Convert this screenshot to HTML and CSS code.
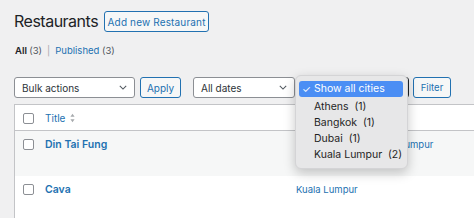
FILE: index.html
```html
<!DOCTYPE html>
<html>
<head>
<meta charset="utf-8">
<link rel="stylesheet" href="styles.css">
</head>
<body>
<div class="wrap">
  <div class="head">
    <h1 class="title">Restaurants</h1>
    <a class="btn btn-add">Add new Restaurant</a>
  </div>
  <ul class="subsub">
    <li class="current">All <span class="count">(3)</span></li>
    <li class="sep">|</li>
    <li><a class="link">Published</a> <span class="count">(3)</span></li>
  </ul>
  <div class="tablenav">
    <div class="select sel-bulk">Bulk actions<svg class="chev" viewBox="0 0 10 6"><path d="M1 1l4 4 4-4" fill="none" stroke="#50575e" stroke-width="1.3"/></svg></div>
    <a class="btn btn-apply">Apply</a>
    <div class="select sel-dates">All dates<svg class="chev" viewBox="0 0 10 6"><path d="M1 1l4 4 4-4" fill="none" stroke="#50575e" stroke-width="1.3"/></svg></div>
    <div class="city-wrap">
      <div class="select sel-city focus"></div>
      <ul class="menu">
        <li class="item active"><span class="check">✓</span>Show all cities</li>
        <li class="item">Athens&nbsp;&nbsp;(1)</li>
        <li class="item">Bangkok&nbsp;&nbsp;(1)</li>
        <li class="item">Dubai&nbsp;&nbsp;(1)</li>
        <li class="item">Kuala Lumpur&nbsp;&nbsp;(2)</li>
      </ul>
    </div>
    <a class="btn btn-filter">Filter</a>
  </div>
  <table class="list">
    <thead>
      <tr>
        <th class="cb"><span class="box"></span></th>
        <th class="col-title"><span class="link">Title</span><svg class="sort" viewBox="0 0 6 11"><path d="M3 0.5L5.5 4H0.5z M3 10.5L0.5 7h5z" fill="#a7aaad"/></svg></th>
        <th class="col-city"></th>
      </tr>
    </thead>
    <tbody>
      <tr class="alt">
        <td class="cb"><span class="box"></span></td>
        <td class="col-title"><a class="row-title">Din Tai Fung</a></td>
        <td class="col-city"><a class="city">Bangkok, Dubai, Kuala Lumpur</a></td>
      </tr>
      <tr>
        <td class="cb"><span class="box"></span></td>
        <td class="col-title"><a class="row-title">Cava</a></td>
        <td class="col-city"><a class="city">Kuala Lumpur</a></td>
      </tr>
    </tbody>
  </table>
</div>
</body>
</html>
```

FILE: styles.css
```css
html, body {
  margin: 0;
  padding: 0;
  background: #f0f0f1;
  overflow: hidden;
  font-family: Inter, "Liberation Sans", sans-serif;
  font-size: 10px;
  color: #2c3338;
}
.wrap {
  padding: 11px 0 0 14px;
}
.head {
  display: flex;
  align-items: center;
  gap: 6px;
  height: 21px;
}
.title {
  margin: 0;
  font-size: 16px;
  font-weight: 400;
  letter-spacing: -0.5px;
  color: #1d2327;
  line-height: 21px;
}
.btn {
  box-sizing: border-box;
  display: inline-flex;
  align-items: center;
  justify-content: center;
  height: 21px;
  border: 1px solid #2271b1;
  border-radius: 3px;
  background: #f6f7f7;
  color: #2271b1;
  font-size: 10px;
}
.btn-add { width: 105px; letter-spacing: 0.15px; }
.btn-apply { width: 41px; margin-left: 5px; }
.btn-filter { width: 38px; margin-left: 4px; font-size: 9.5px; }
.subsub {
  list-style: none;
  margin: 13px 0 0 1px;
  padding: 0;
  display: flex;
  gap: 4px;
  height: 12px;
  line-height: 12px;
  font-size: 9.5px;
  color: #50575e;
}
.subsub .current { color: #1d2327; font-weight: 600; }
.subsub .current .count { font-weight: 400; color: #50575e; }
.subsub .sep { color: #a7aaad; padding: 0 1px; }
.link { color: #2271b1; }
.tablenav {
  margin-top: 20px;
  display: flex;
  align-items: center;
  height: 21px;
}
.select {
  box-sizing: border-box;
  height: 21px;
  border: 1px solid #8c8f94;
  border-radius: 3px;
  background: #fff;
  display: flex;
  align-items: center;
  justify-content: space-between;
  padding: 0 7px 0 7px;
  font-size: 10px;
  color: #2c3338;
}
.chev { width: 8px; height: 5px; }
.sel-bulk { width: 121px; }
.sel-dates { width: 102px; margin-left: 12px; }
.city-wrap {
  position: relative;
  margin-left: 4px;
}
.sel-city { width: 110px; }
.sel-city.focus { border-color: #1d2327; }
.menu {
  position: absolute;
  left: -4px;
  top: -2px;
  width: 113px;
  box-sizing: border-box;
  margin: 0;
  padding: 5px 4px 5px 3px;
  list-style: none;
  background: #e7e7e8;
  border: 1px solid #d4d4d6;
  border-radius: 6px;
  box-shadow: 0 4px 12px rgba(0, 0, 0, 0.22);
  z-index: 5;
}
.item {
  height: 16px;
  line-height: 16px;
  padding-left: 15px;
  font-size: 10.5px;
  color: #1f1f1f;
  position: relative;
  border-radius: 3px;
}
.item.active {
  background: #4b8ef4;
  color: #fff;
  margin-bottom: 2px;
}
.check {
  position: absolute;
  left: 3px;
  top: 0;
  font-size: 10px;
}
.list {
  margin-top: 6px;
  width: 100%;
  border-collapse: collapse;
  background: #fff;
  border-left: 1px solid #c3c4c7;
  border-top: 1px solid #c3c4c7;
}
.list th, .list td {
  padding: 0;
  text-align: left;
  vertical-align: top;
  font-weight: 400;
}
.list thead tr { height: 26px; border-bottom: 1px solid #c3c4c7; }
.list thead th { vertical-align: middle; }
.list tbody tr { height: 45px; }
.list tbody tr.alt { background: #f6f7f7; }
.cb { width: 30px; }
.box {
  display: block;
  box-sizing: border-box;
  width: 11px;
  height: 11px;
  margin-left: 8px;
  border: 1px solid #8c8f94;
  border-radius: 2px;
  background: #fff;
}
.list thead .box { margin-top: 1px; }
.list tbody .box { margin-top: 8px; }
.col-title { width: 251px; font-size: 10px; }
.col-title .link { vertical-align: middle; }
.sort { width: 5px; height: 10px; margin-left: 5px; vertical-align: middle; }
.row-title {
  display: block;
  margin-top: 7px;
  font-weight: 600;
  font-size: 10.5px;
  color: #2271b1;
}
.city {
  display: block;
  margin-top: 8px;
  font-size: 9.5px;
  color: #2271b1;
  white-space: nowrap;
}
```
